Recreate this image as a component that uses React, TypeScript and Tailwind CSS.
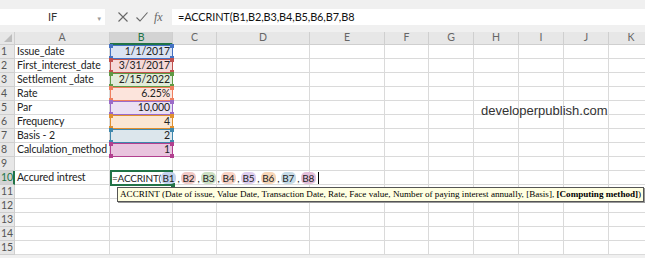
import React from "react"

const COLS = [
  { name: "A", w: "w-[95px]" },
  { name: "B", w: "w-[63px]" },
  { name: "C", w: "w-[44px]" },
  { name: "D", w: "w-[93px]" },
  { name: "E", w: "w-[75px]" },
  { name: "F", w: "w-[44px]" },
  { name: "G", w: "w-[45px]" },
  { name: "H", w: "w-[45px]" },
  { name: "I", w: "w-[45px]" },
  { name: "J", w: "w-[45px]" },
  { name: "K", w: "w-[45px]" },
]

const DATA = [
  { label: "Issue_date", value: "1/1/2017", fill: "bg-[#dae3f3]", line: "border-[#4472c4]", dot: "bg-[#4472c4]" },
  { label: "First_interest_date", value: "3/31/2017", fill: "bg-[#f5d9d8]", line: "border-[#c0504d]", dot: "bg-[#c0504d]" },
  { label: "Settlement _date", value: "2/15/2022", fill: "bg-[#e2ecda]", line: "border-[#5f9a45]", dot: "bg-[#5f9a45]" },
  { label: "Rate", value: "6.25%", fill: "bg-[#fce4dc]", line: "border-[#ef7f5f]", dot: "bg-[#ef7f5f]" },
  { label: "Par", value: "10,000", fill: "bg-[#ebe0f3]", line: "border-[#9b6bc8]", dot: "bg-[#9b6bc8]" },
  { label: "Frequency", value: "4", fill: "bg-[#fbe7d3]", line: "border-[#e0902f]", dot: "bg-[#e0902f]" },
  { label: "Basis - 2", value: "2", fill: "bg-[#dce6ec]", line: "border-[#3f88ad]", dot: "bg-[#3f88ad]" },
  { label: "Calculation_method", value: "1", fill: "bg-[#e9c4de]", line: "border-[#b2408f]", dot: "bg-[#b2408f]" },
]

const CHIPS = [
  { ref: "B1", bg: "bg-[#c3d2ee]" },
  { ref: "B2", bg: "bg-[#f1c9c6]" },
  { ref: "B3", bg: "bg-[#cde0c4]" },
  { ref: "B4", bg: "bg-[#f8d3c5]" },
  { ref: "B5", bg: "bg-[#ddcdee]" },
  { ref: "B6", bg: "bg-[#f7d6b8]" },
  { ref: "B7", bg: "bg-[#c6dbe7]" },
  { ref: "B8", bg: "bg-[#e4bfda]" },
]

const grid = "border-r border-b border-[#dadada]"

function RefCell({ d }: { d: (typeof DATA)[number] }) {
  return (
    <div className={`relative w-[63px] shrink-0 h-full ${d.fill} flex items-center justify-end pr-[3px]`}>
      <div className={`absolute inset-0 border ${d.line}`} />
      <span className={`absolute -left-[1px] -top-[1px] w-[4px] h-[4px] ${d.dot}`} />
      <span className={`absolute -right-[1px] -top-[1px] w-[4px] h-[4px] ${d.dot}`} />
      <span className={`absolute -left-[1px] -bottom-[1px] w-[4px] h-[4px] ${d.dot}`} />
      <span className={`absolute -right-[1px] -bottom-[1px] w-[4px] h-[4px] ${d.dot}`} />
      <span className="relative">{d.value}</span>
    </div>
  )
}

export default function App() {
  const rows = Array.from({ length: 15 }, (_, i) => i + 1)

  return (
    <div
      className="w-[645px] h-[258px] overflow-hidden bg-[#f0f0f0] text-[10.5px] tracking-[-0.1px] text-[#222]"
      style={{ fontFamily: 'Lato, "Liberation Sans", sans-serif' }}
    >
      {/* Formula bar */}
      <div className="h-[32px] pt-[9px]">
        <div className="flex h-[16px] items-center">
          <div className="relative w-[105px] h-full bg-white flex items-center justify-center text-[11px] text-[#333]">
            IF
            <span className="absolute right-[3px] top-[5px] text-[6px] text-[#999]">▼</span>
          </div>
          <div className="w-[67px] flex items-center text-[#777]">
            <svg width="14" height="14" viewBox="0 0 14 14" className="ml-[11px]">
              <path d="M2.5 2.5 L11.5 11.5 M11.5 2.5 L2.5 11.5" stroke="#666" strokeWidth="1.1" fill="none" />
            </svg>
            <svg width="14" height="14" viewBox="0 0 14 14" className="ml-[5px]">
              <path d="M1.5 7.5 L5 11 L12.5 2.5" stroke="#666" strokeWidth="1.1" fill="none" />
            </svg>
            <span
              className="ml-[5px] text-[12px] italic text-[#666]"
              style={{ fontFamily: '"Liberation Serif", serif' }}
            >
              fx
            </span>
          </div>
          <div className="flex-1 h-full bg-white flex items-center pl-[6px] text-[10.9px] text-[#111]">
            =ACCRINT(B1,B2,B3,B4,B5,B6,B7,B8
          </div>
        </div>
      </div>

      {/* Sheet */}
      <div className="relative bg-white">
        {/* column headers */}
        <div className="flex h-[13px] bg-[#e7e7e7] text-[#666]">
          <div className="w-[15px] shrink-0 h-full border-r border-b border-[#cfcfcf] relative">
            <svg width="8" height="8" viewBox="0 0 8 8" className="absolute right-[2px] bottom-[2px]">
              <path d="M8 0 L8 8 L0 8 Z" fill="#bdbdbd" />
            </svg>
          </div>
          {COLS.map((c) => (
            <div
              key={c.name}
              className={`${c.w} shrink-0 h-full flex items-center justify-center ${
                c.name === "B"
                  ? "bg-[#d3d3d3] text-[#217346] border-b-2 border-b-[#217346] border-r border-r-[#cfcfcf]"
                  : "border-r border-b border-[#cfcfcf]"
              }`}
            >
              {c.name}
            </div>
          ))}
        </div>

        {rows.map((r) => {
          const d = DATA[r - 1]
          const active = r === 10
          return (
            <div key={r} className="flex h-[14px]">
              <div
                className={`w-[15px] shrink-0 h-full flex items-center pl-[1px] ${
                  active
                    ? "bg-[#d3d3d3] text-[#217346] border-r-2 border-r-[#217346] border-b border-b-[#cfcfcf]"
                    : "bg-[#e7e7e7] text-[#555] border-r border-b border-[#cfcfcf]"
                }`}
              >
                {r}
              </div>
              {COLS.map((c) => {
                if (c.name === "A") {
                  return (
                    <div key={c.name} className={`${c.w} shrink-0 h-full ${grid} flex items-center pl-[2px] whitespace-nowrap`}>
                      {d ? d.label : active ? "Accured intrest" : ""}
                    </div>
                  )
                }
                if (c.name === "B" && d) {
                  return <RefCell key={c.name} d={d} />
                }
                if (c.name === "B" && active) {
                  return (
                    <div key={c.name} className="relative w-[63px] shrink-0 h-full z-10">
                      <div className="absolute -inset-y-[1px] inset-x-0 border-2 border-[#217346] pointer-events-none" />
                      <span className="absolute right-[-2px] bottom-[-2px] w-[4px] h-[4px] bg-[#217346]" />
                      <div className="absolute left-[2px] top-0 h-full flex items-center whitespace-nowrap pr-[2px] text-[10px] tracking-[-0.2px]">
                        <span>=ACCRINT(</span>
                        {CHIPS.map((ch, i) => (
                          <React.Fragment key={ch.ref}>
                            <span className={`${ch.bg} rounded-[5px] px-[1.5px] leading-[12px]`}>{ch.ref}</span>
                            {i < CHIPS.length - 1 && <span className="px-[1.5px]">,</span>}
                          </React.Fragment>
                        ))}
                        <span className="ml-[2px] w-[1px] h-[12px] bg-black" />
                      </div>
                    </div>
                  )
                }
                return <div key={c.name} className={`${c.w} shrink-0 h-full ${grid}`} />
              })}
            </div>
          )
        })}

        {/* watermark */}
        <div
          className="absolute left-[481px] top-[69px] text-[13px] tracking-normal text-[#333]"
          style={{ fontFamily: '"Liberation Sans", Arial, sans-serif' }}
        >
          developerpublish.com
        </div>

        {/* function tooltip */}
        <div
          className="absolute left-[117px] top-[155px] h-[15px] border border-[#555] bg-[#ffffe1] px-[2px] flex items-center whitespace-nowrap text-[9.1px] tracking-normal text-black shadow-[1px_1px_0_#999]"
          style={{ fontFamily: '"Liberation Serif", "Times New Roman", serif' }}
        >
          ACCRINT (Date of issue, Value Date, Transaction Date, Rate, Face value, Number of paying interest annually, [Basis],&nbsp;
          <b>[Computing method]</b>)
        </div>
      </div>
    </div>
  )
}
